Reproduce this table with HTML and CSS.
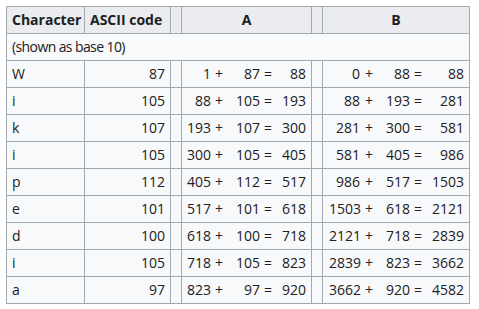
FILE: index.html
```html
<!DOCTYPE html>
<html lang="en">
<head>
<meta charset="utf-8">
<title>Adler-32 example</title>
<link rel="stylesheet" href="styles.css">
</head>
<body>
<table class="adler">
  <colgroup>
    <col class="c-char"><col class="c-code"><col class="c-gap"><col class="c-a"><col class="c-gap"><col class="c-b">
  </colgroup>
  <thead>
    <tr><th class="left">Character</th><th class="left">ASCII code</th><th></th><th>A</th><th></th><th>B</th></tr>
  </thead>
  <tbody>
    <tr><td colspan="6" class="note">(shown as base 10)</td></tr>
    <tr><td>W</td><td class="num">87</td><td></td>
      <td><div class="sum sa"><span class="n1">1</span><span class="op">+</span><span class="n2">87</span><span class="eq">=</span><span class="n3">88</span></div></td><td></td>
      <td><div class="sum sb"><span class="n1">0</span><span class="op">+</span><span class="n2">88</span><span class="eq">=</span><span class="n3">88</span></div></td></tr>
    <tr><td>i</td><td class="num">105</td><td></td>
      <td><div class="sum sa"><span class="n1">88</span><span class="op">+</span><span class="n2">105</span><span class="eq">=</span><span class="n3">193</span></div></td><td></td>
      <td><div class="sum sb"><span class="n1">88</span><span class="op">+</span><span class="n2">193</span><span class="eq">=</span><span class="n3">281</span></div></td></tr>
    <tr><td>k</td><td class="num">107</td><td></td>
      <td><div class="sum sa"><span class="n1">193</span><span class="op">+</span><span class="n2">107</span><span class="eq">=</span><span class="n3">300</span></div></td><td></td>
      <td><div class="sum sb"><span class="n1">281</span><span class="op">+</span><span class="n2">300</span><span class="eq">=</span><span class="n3">581</span></div></td></tr>
    <tr><td>i</td><td class="num">105</td><td></td>
      <td><div class="sum sa"><span class="n1">300</span><span class="op">+</span><span class="n2">105</span><span class="eq">=</span><span class="n3">405</span></div></td><td></td>
      <td><div class="sum sb"><span class="n1">581</span><span class="op">+</span><span class="n2">405</span><span class="eq">=</span><span class="n3">986</span></div></td></tr>
    <tr><td>p</td><td class="num">112</td><td></td>
      <td><div class="sum sa"><span class="n1">405</span><span class="op">+</span><span class="n2">112</span><span class="eq">=</span><span class="n3">517</span></div></td><td></td>
      <td><div class="sum sb"><span class="n1">986</span><span class="op">+</span><span class="n2">517</span><span class="eq">=</span><span class="n3">1503</span></div></td></tr>
    <tr><td>e</td><td class="num">101</td><td></td>
      <td><div class="sum sa"><span class="n1">517</span><span class="op">+</span><span class="n2">101</span><span class="eq">=</span><span class="n3">618</span></div></td><td></td>
      <td><div class="sum sb"><span class="n1">1503</span><span class="op">+</span><span class="n2">618</span><span class="eq">=</span><span class="n3">2121</span></div></td></tr>
    <tr><td>d</td><td class="num">100</td><td></td>
      <td><div class="sum sa"><span class="n1">618</span><span class="op">+</span><span class="n2">100</span><span class="eq">=</span><span class="n3">718</span></div></td><td></td>
      <td><div class="sum sb"><span class="n1">2121</span><span class="op">+</span><span class="n2">718</span><span class="eq">=</span><span class="n3">2839</span></div></td></tr>
    <tr><td>i</td><td class="num">105</td><td></td>
      <td><div class="sum sa"><span class="n1">718</span><span class="op">+</span><span class="n2">105</span><span class="eq">=</span><span class="n3">823</span></div></td><td></td>
      <td><div class="sum sb"><span class="n1">2839</span><span class="op">+</span><span class="n2">823</span><span class="eq">=</span><span class="n3">3662</span></div></td></tr>
    <tr><td>a</td><td class="num">97</td><td></td>
      <td><div class="sum sa"><span class="n1">823</span><span class="op">+</span><span class="n2">97</span><span class="eq">=</span><span class="n3">920</span></div></td><td></td>
      <td><div class="sum sb"><span class="n1">3662</span><span class="op">+</span><span class="n2">920</span><span class="eq">=</span><span class="n3">4582</span></div></td></tr>
  </tbody>
</table>
</body>
</html>
```

FILE: styles.css
```css
html, body {
  margin: 0;
  background: #ffffff;
}
body {
  padding: 6px;
  font-family: "Open Sans", "Noto Sans", sans-serif;
  font-size: 14px;
  color: #202122;
}
.adler {
  border-collapse: collapse;
  table-layout: fixed;
  width: 464px;
  background: #f8f9fa;
  border: 1px solid #a2a9b1;
}
.c-char { width: 78px; }
.c-code { width: 86px; }
.c-gap { width: 11px; }
.c-a { width: 130px; }
.c-b { width: 147px; }
.adler th,
.adler td {
  border: 1px solid #a2a9b1;
  padding: 0 5px;
  height: 26px;
  line-height: 20px;
  white-space: nowrap;
  overflow: visible;
}
.adler th {
  background: #eaecf0;
  font-weight: 700;
  text-align: center;
}
.adler th.left { text-align: left; }
.adler td.num { text-align: right; }
.adler td.note {
  text-align: left;
  letter-spacing: -0.6px;
}
.sum {
  display: flex;
  justify-content: flex-end;
}
.sum span { display: block; }
.sa .n1 { width: 24px; text-align: right; }
.sa .op { width: 16px; text-align: center; }
.sa .n2 { width: 33px; text-align: right; }
.sa .eq { width: 16px; text-align: center; }
.sa .n3 { width: 30px; text-align: right; }
.sb .n1 { width: 31px; text-align: right; }
.sb .op { width: 18px; text-align: center; }
.sb .n2 { width: 32px; text-align: right; }
.sb .eq { width: 16px; text-align: center; }
.sb .n3 { width: 38px; text-align: right; }
```
